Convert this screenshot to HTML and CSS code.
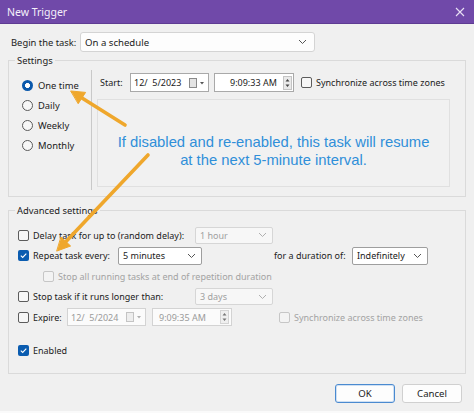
FILE: index.html
```html
<!DOCTYPE html>
<html>
<head>
<meta charset="utf-8">
<link rel="stylesheet" href="styles.css">
</head>
<body>
<div class="window">
  <div class="titlebar">
    <span class="title">New Trigger</span>
    <span class="close">
      <svg width="10" height="10" viewBox="0 0 10 10"><path d="M1 1L9 9M9 1L1 9" stroke="#e8e0f4" stroke-width="1.1"/></svg>
    </span>
  </div>
  <div class="content">
    <div class="begin-row">
      <span class="begin-label">Begin the task:</span>
      <div class="combo combo-begin"><span>On a schedule</span><svg class="chev" width="9" height="6" viewBox="0 0 9 6"><path d="M1 1L4.5 4.5L8 1" fill="none" stroke="#555" stroke-width="1"/></svg></div>
    </div>

    <div class="group group-settings">
      <span class="group-title">Settings</span>
      <div class="radio-col">
        <div class="radio-row"><span class="radio checked"></span><span>One time</span></div>
        <div class="radio-row"><span class="radio"></span><span>Daily</span></div>
        <div class="radio-row"><span class="radio"></span><span>Weekly</span></div>
        <div class="radio-row"><span class="radio"></span><span>Monthly</span></div>
      </div>
      <div class="settings-right">
        <div class="start-row">
          <span class="start-label">Start:</span>
          <div class="field date"><span>12/&nbsp; 5/2023</span>
            <span class="cal"><svg width="16" height="10" viewBox="0 0 16 10"><rect x="0.5" y="0.5" width="7" height="9" fill="#e4e4e4" stroke="#8a8a8a"/><path d="M11 4L15 4L13 6.5Z" fill="#555"/></svg></span>
          </div>
          <div class="field time"><span>9:09:33 AM</span>
            <span class="spin"><svg width="9" height="14" viewBox="0 0 9 14"><rect x="0.5" y="0.5" width="8" height="13" fill="#e9e9e9" stroke="#c4c4c4"/><path d="M2.5 5.5L4.5 3L6.5 5.5Z M2.5 8.5L4.5 11L6.5 8.5Z" fill="#444"/></svg></span>
          </div>
          <span class="check sync-check"></span>
          <span class="sync-label">Synchronize across time zones</span>
        </div>
        <div class="panel">
          <div class="note">If disabled and re-enabled, this task will resume</div>
          <div class="note">at the next 5-minute interval.</div>
        </div>
      </div>
    </div>

    <div class="group group-adv">
      <span class="group-title">Advanced settings</span>
      <div class="adv-row">
        <span class="check"></span>
        <span class="adv-label w162">Delay task for up to (random delay):</span>
        <div class="combo combo-sm disabled"><span>1 hour</span><svg class="chev" width="9" height="6" viewBox="0 0 9 6"><path d="M1 1L4.5 4.5L8 1" fill="none" stroke="#b0b0b0" stroke-width="1"/></svg></div>
      </div>
      <div class="adv-row">
        <span class="check on"><svg width="9" height="9" viewBox="0 0 9 9"><path d="M1.8 4.6L3.7 6.4L7.3 2.6" fill="none" stroke="#fff" stroke-width="1.1"/></svg></span>
        <span class="adv-label w85">Repeat task every:</span>
        <div class="combo combo-rep"><span>5 minutes</span><svg class="chev" width="9" height="6" viewBox="0 0 9 6"><path d="M1 1L4.5 4.5L8 1" fill="none" stroke="#555" stroke-width="1"/></svg></div>
        <span class="dur-label">for a duration of:</span>
        <div class="combo combo-dur"><span>Indefinitely</span><svg class="chev" width="9" height="6" viewBox="0 0 9 6"><path d="M1 1L4.5 4.5L8 1" fill="none" stroke="#555" stroke-width="1"/></svg></div>
      </div>
      <div class="adv-row indent">
        <span class="check dis"></span>
        <span class="adv-label grey">Stop all running tasks at end of repetition duration</span>
      </div>
      <div class="adv-row">
        <span class="check"></span>
        <span class="adv-label w162">Stop task if it runs longer than:</span>
        <div class="combo combo-sm disabled"><span>3 days</span><svg class="chev" width="9" height="6" viewBox="0 0 9 6"><path d="M1 1L4.5 4.5L8 1" fill="none" stroke="#b0b0b0" stroke-width="1"/></svg></div>
      </div>
      <div class="adv-row">
        <span class="check"></span>
        <span class="adv-label w34">Expire:</span>
        <div class="field date disabled"><span>12/&nbsp; 5/2024</span>
          <span class="cal"><svg width="16" height="10" viewBox="0 0 16 10"><rect x="0.5" y="0.5" width="7" height="9" fill="#eeeeee" stroke="#c4c4c4"/><path d="M11 4L15 4L13 6.5Z" fill="#b0b0b0"/></svg></span>
        </div>
        <div class="field time disabled"><span>9:09:35 AM</span>
          <span class="spin"><svg width="9" height="14" viewBox="0 0 9 14"><rect x="0.5" y="0.5" width="8" height="13" fill="#efefef" stroke="#d4d4d4"/><path d="M2.5 5.5L4.5 3L6.5 5.5Z M2.5 8.5L4.5 11L6.5 8.5Z" fill="#777"/></svg></span>
        </div>
        <span class="check dis exp-sync"></span>
        <span class="adv-label grey">Synchronize across time zones</span>
      </div>
      <div class="adv-row enabled-row">
        <span class="check on"><svg width="9" height="9" viewBox="0 0 9 9"><path d="M1.8 4.6L3.7 6.4L7.3 2.6" fill="none" stroke="#fff" stroke-width="1.1"/></svg></span>
        <span class="adv-label">Enabled</span>
      </div>
    </div>

    <div class="buttons">
      <button class="btn default">OK</button>
      <button class="btn">Cancel</button>
    </div>
  </div>

  <svg class="arrows" width="474" height="413" viewBox="0 0 474 413">
    <g stroke="#efa72c" stroke-width="3.6" stroke-linecap="round" fill="#efa72c">
      <line x1="125" y1="125" x2="82" y2="98"/>
      <polygon points="71,91 85.6,92.4 78.4,103.4" stroke-width="1" stroke-linejoin="round"/>
      <line x1="148" y1="155" x2="66" y2="241.6"/>
      <polygon points="57,251 70.6,246 61.2,237.2" stroke-width="1" stroke-linejoin="round"/>
    </g>
  </svg>
</div>
</body>
</html>
```
FILE: styles.css
```css
html, body {
  margin: 0;
  padding: 0;
}
body {
  width: 474px;
  height: 413px;
  overflow: hidden;
  font-family: "Noto Sans", "DejaVu Sans", sans-serif;
  font-size: 9px;
  color: #1b1b1b;
  background: #f0f0f0;
  white-space: nowrap;
}
.window {
  position: relative;
  width: 474px;
  height: 413px;
  background: #f0f0f0;
  box-sizing: border-box;
  border-bottom: 2px solid #fafafa;
}
.titlebar {
  height: 23px;
  background: #7049a9;
  border-bottom: 1px solid #5e3b93;
  display: flex;
  align-items: center;
  justify-content: space-between;
  padding: 0 9px 0 7px;
  color: #fff;
}
.title {
  font-size: 10.5px;
  color: #f4f0fa;
}
.close {
  display: flex;
  align-items: center;
}
.content {
  padding: 0 8px;
}
.begin-row {
  display: flex;
  align-items: center;
  margin-top: 8px;
  height: 20px;
}
.begin-label {
  width: 72px;
  padding-left: 3px;
  box-sizing: border-box;
  font-size: 9.4px;
}
.combo {
  display: flex;
  align-items: center;
  justify-content: space-between;
  box-sizing: border-box;
  background: #fdfdfd;
  border: 1px solid #cfcfcf;
  border-radius: 2px;
  padding: 0 5px 0 4px;
}
.combo-begin {
  width: 235px;
  height: 20px;
  border-radius: 3px;
  border-color: #d4d4d4;
  padding-right: 7px;
  font-size: 9.6px;
}
.group {
  position: relative;
  border: 1px solid #dadada;
  box-sizing: border-box;
}
.group-title {
  position: absolute;
  top: -7px;
  left: 6px;
  padding: 0 2px;
  line-height: 13px;
  background: #f0f0f0;
  font-size: 9.4px;
}
.group-settings {
  margin-top: 8px;
  height: 137px;
  display: flex;
}
.radio-col {
  width: 83px;
  margin-top: 9px;
  height: 120px;
  border-right: 1px solid #c9c9c9;
  padding: 5px 0 0 13px;
  box-sizing: border-box;
  font-size: 9.4px;
}
.radio-row {
  display: flex;
  align-items: center;
  height: 20px;
  gap: 5px;
}
.radio {
  width: 11px;
  height: 11px;
  box-sizing: border-box;
  border-radius: 50%;
  border: 1px solid #5a5a5a;
  background: #f7f7f7;
}
.radio.checked {
  border: none;
  background: radial-gradient(circle, #ffffff 0 2.2px, #0a58ab 2.8px);
}
.settings-right {
  flex: 1;
  padding-top: 12px;
}
.start-row {
  display: flex;
  align-items: center;
  height: 19px;
  padding-left: 8px;
}
.start-label {
  width: 30px;
}
.field {
  display: flex;
  align-items: center;
  justify-content: space-between;
  box-sizing: border-box;
  height: 19px;
  background: #ffffff;
  border: 1px solid #a9a9a9;
  padding: 0 3px 0 3px;
}
.field.date {
  width: 79px;
}
.field.time {
  width: 80px;
  margin-left: 5px;
  padding-left: 15px;
  padding-right: 1px;
}
.field .cal, .field .spin {
  display: flex;
  align-items: center;
}
.field.disabled {
  height: 18px;
  border-color: #d3d3d3;
  background: #fbfbfb;
  color: #9a9a9a;
}
.check {
  display: inline-flex;
  align-items: center;
  justify-content: center;
  width: 11px;
  height: 11px;
  box-sizing: border-box;
  border: 1px solid #5c5c5c;
  border-radius: 2px;
  background: #f7f7f7;
  flex: none;
}
.check.on {
  border: none;
  background: #0a5cb0;
}
.check.dis {
  border-color: #c6c6c6;
  background: #f3f3f3;
}
.sync-check {
  margin-left: 7px;
}
.sync-label {
  margin-left: 4px;
}
.panel {
  margin: 7px 0 0 5px;
  width: 353px;
  height: 88px;
  box-sizing: border-box;
  border: 1px solid #e0e0e0;
  background: #f1f1f1;
  padding-top: 33px;
}
.note {
  text-align: center;
  font-family: "Liberation Sans", Arial, sans-serif;
  font-size: 14.8px;
  line-height: 18px;
  color: #2f8fd9;
}
.group-adv {
  margin-top: 13px;
  height: 164px;
  padding: 14px 0 0 9px;
}
.adv-row {
  display: flex;
  align-items: center;
  height: 20.5px;
}
.adv-label {
  margin-left: 4px;
}
.w162 { width: 162px; flex: none; }
.w85 { width: 85px; flex: none; }
.w34 { width: 34px; flex: none; }
.grey { color: #a3a3a3; }
.indent { padding-left: 25px; }
.combo-sm {
  width: 78px;
  height: 17px;
}
.combo.disabled {
  background: #f7f7f7;
  border-color: #d6d6d6;
  color: #a0a0a0;
}
.combo-rep {
  width: 84px;
  height: 18px;
  border-color: #9e9e9e;
  background: #ffffff;
}
.dur-label {
  margin-left: 72px;
  width: 78px;
}
.combo-dur {
  width: 76px;
  height: 18px;
  border-color: #9e9e9e;
  background: #ffffff;
}
.field.time.disabled {
  margin-left: 6px;
  padding-left: 6px;
  padding-right: 2px;
}
.exp-sync {
  margin-left: 47px;
}
.enabled-row {
  margin-top: 13px;
  height: 20px;
}
.buttons {
  display: flex;
  justify-content: flex-end;
  gap: 7px;
  margin-top: 10px;
  padding-right: 4px;
}
.btn {
  width: 60px;
  height: 19px;
  box-sizing: border-box;
  font-family: "Noto Sans", "DejaVu Sans", sans-serif;
  font-size: 9.6px;
  color: #1b1b1b;
  background: #fdfdfd;
  border: 1px solid #d0d0d0;
  border-radius: 3px;
  padding: 0;
}
.btn.default {
  border: 1px solid #4a8ad0;
  box-shadow: inset 0 0 0 1px #cfe0f3;
}
.arrows {
  position: absolute;
  left: 0;
  top: 0;
  pointer-events: none;
}
```
